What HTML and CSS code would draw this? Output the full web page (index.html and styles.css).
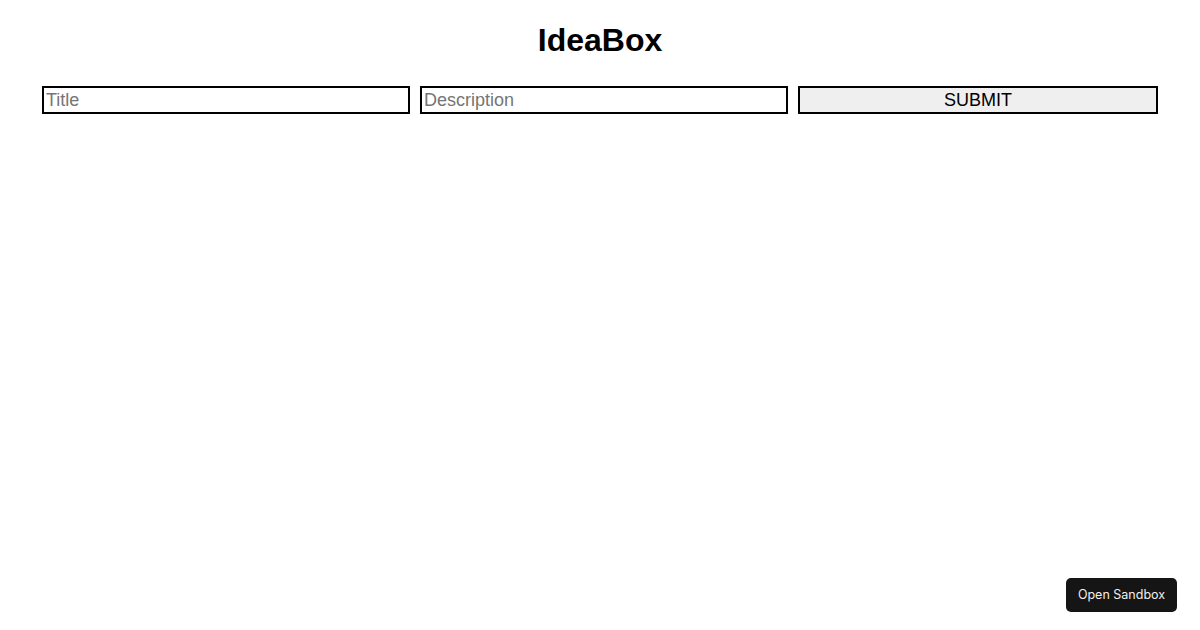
FILE: index.html
```html
<!DOCTYPE html>
<html>
<head>
<meta charset="utf-8">
<link rel="stylesheet" href="styles.css">
</head>
<body>
<h1 class="title">IdeaBox</h1>
<form class="idea-form">
  <input class="field" type="text" placeholder="Title">
  <input class="field" type="text" placeholder="Description">
  <button class="submit" type="button">SUBMIT</button>
</form>
<a class="sandbox" href="#">Open Sandbox</a>
</body>
</html>
```
FILE: styles.css
```css
html, body {
  margin: 0;
  padding: 0;
  background: #fff;
}
body {
  font-family: "Liberation Sans", Arial, sans-serif;
}
.title {
  margin: 22px 0 0;
  text-align: center;
  font-size: 32px;
  font-weight: bold;
  line-height: normal;
  color: #000;
}
.idea-form {
  display: flex;
  gap: 10px;
  padding: 0 42px;
  margin-top: 27px;
}
.field, .submit {
  box-sizing: border-box;
  height: 28px;
  border: 2px solid #000;
  font-family: "Liberation Sans", Arial, sans-serif;
  font-size: 18px;
  margin: 0;
  outline: none;
}
.field {
  width: 368px;
  padding: 0 2px;
  background: #fff;
  color: #000;
}
.field::placeholder {
  color: #757575;
}
.submit {
  width: 360px;
  background: #efefef;
  color: #000;
  padding: 0;
}
.sandbox {
  position: fixed;
  right: 23px;
  bottom: 18px;
  width: 111px;
  height: 34px;
  display: flex;
  align-items: center;
  justify-content: center;
  box-sizing: border-box;
  padding-bottom: 1px;
  background: #151515;
  color: #f0f0f0;
  border-radius: 5px;
  font-family: Inter, "Liberation Sans", sans-serif;
  font-size: 12.5px;
  text-decoration: none;
}
```
